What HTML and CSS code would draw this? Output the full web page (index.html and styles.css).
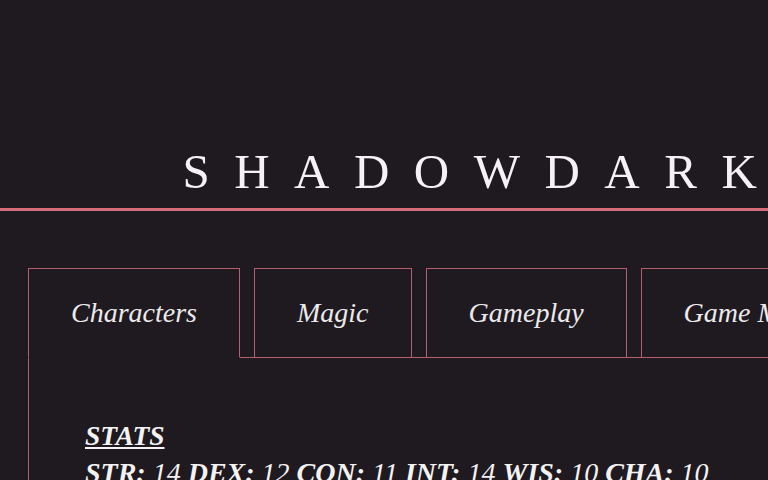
FILE: index.html
```html
<!DOCTYPE html>
<html lang="en">
<head>
    <meta charset="UTF-8">
    <meta name="viewport" content="width=device-width, initial-scale=1.0">
    <title>Shadowdark</title>
    <link rel="stylesheet" href="styles.css">
</head>
<body>
    <div class="page">
        <header class="site-header">
            <h1>SHADOWDARK</h1>
        </header>

        <main class="content">
            <nav class="tabs">
                <button class="tab active">Characters</button>
                <button class="tab">Magic</button>
                <button class="tab">Gameplay</button>
                <button class="tab">Game Mechanics</button>
            </nav>

            <section class="panel">
                <h3 class="panel-title">STATS</h3>
                <p class="stats">
                    <b>STR:</b> 14 <b>DEX:</b> 12 <b>CON:</b> 11 <b>INT:</b> 14 <b>WIS:</b> 10 <b>CHA:</b> 10
                </p>
            </section>
        </main>
    </div>
</body>
</html>
```

FILE: styles.css
```css
* { margin: 0; padding: 0; box-sizing: border-box; }
html, body { background: #1e1a1f; overflow-x: hidden; }
body { color: #f4f2f4; font-family: 'Liberation Serif', 'Times New Roman', serif; }

.page { width: max-content; min-width: 100%; }

.site-header { padding: 144px 0 9px; border-bottom: 3px solid #d46c7a; text-align: center; }
.site-header h1 { font-size: 49px; font-weight: 400; letter-spacing: 0.5em; line-height: 55px; }

.content { padding: 57px 42px 0 28px; }

.tabs { display: flex; gap: 14px; align-items: flex-end; }
.tab {
    background: #1e1a1f; color: #ece9ec; border: 1px solid #b85d6e;
    font-family: inherit; font-style: italic; font-size: 28px; line-height: 32px;
    padding: 28px 42px; cursor: pointer; white-space: nowrap;
}
.tab.active { position: relative; z-index: 1; border-bottom-color: #1e1a1f; }

.panel { border: 1px solid #b85d6e; border-bottom: none; margin-top: -1px; padding: 62px 56px 40px; }
.panel-title { font-size: 27.5px; font-style: italic; font-weight: 700; text-decoration: underline; line-height: 31px; }
.stats { font-size: 28px; font-style: italic; line-height: 32px; margin-top: 6px; }
```
